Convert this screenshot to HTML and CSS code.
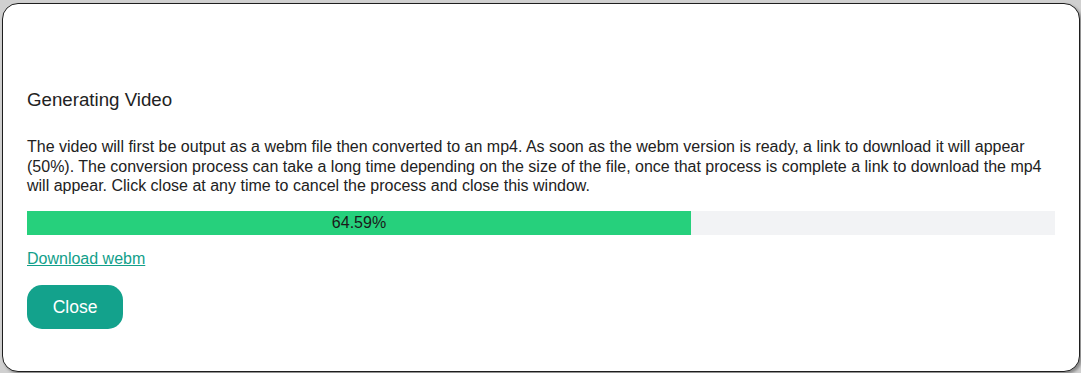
FILE: index.html
```html
<!DOCTYPE html>
<html>
<head>
<meta charset="utf-8">
<link rel="stylesheet" href="styles.css">
</head>
<body>
<div class="modal">
  <h2 class="title">Generating Video</h2>
  <p class="desc">The video will first be output as a webm file then converted to an mp4. As soon as the webm version is ready, a link to download it will appear (50%). The conversion process can take a long time depending on the size of the file, once that process is complete a link to download the mp4 will appear. Click close at any time to cancel the process and close this window.</p>
  <div class="track"><div class="fill" style="width:64.59%">64.59%</div></div>
  <a class="link" href="#">Download webm</a>
  <div class="actions"><button class="btn">Close</button></div>
</div>
</body>
</html>
```
FILE: styles.css
```css
html, body {
  margin: 0;
  padding: 0;
  background: #d0d0d0;
  height: 373px;
  overflow: hidden;
  font-family: "Liberation Sans", Arial, sans-serif;
}
.modal {
  box-sizing: border-box;
  margin: 3px 0 0 2px;
  width: 1078px;
  height: 369px;
  background: #fff;
  border: 1px solid #1e1e1e;
  border-radius: 16px;
  box-shadow: 2px 2px 3px rgba(0,0,0,0.35);
  padding: 86px 24px 0 24px;
}
.title {
  margin: 0;
  font-weight: normal;
  font-size: 18.7px;
  line-height: 20px;
  color: #222;
}
.desc {
  margin: 27px 0 0 0;
  font-size: 16px;
  line-height: 19.5px;
  color: #222;
}
.track {
  margin-top: 15.5px;
  height: 24px;
  background: #f2f3f5;
  display: flex;
}
.fill {
  background: #26d07c;
  color: #1a1a1a;
  font-size: 16px;
  line-height: 24px;
  text-align: center;
}
.link {
  display: inline-block;
  margin-top: 15px;
  font-size: 16px;
  line-height: 18px;
  color: #12a08a;
  text-decoration: underline;
}
.actions {
  margin-top: 17px;
}
.btn {
  width: 96px;
  height: 44px;
  border: none;
  border-radius: 15px;
  background: #13a28c;
  color: #fff;
  font-family: "Liberation Sans", Arial, sans-serif;
  font-size: 17.5px;
  padding: 0;
}
```
